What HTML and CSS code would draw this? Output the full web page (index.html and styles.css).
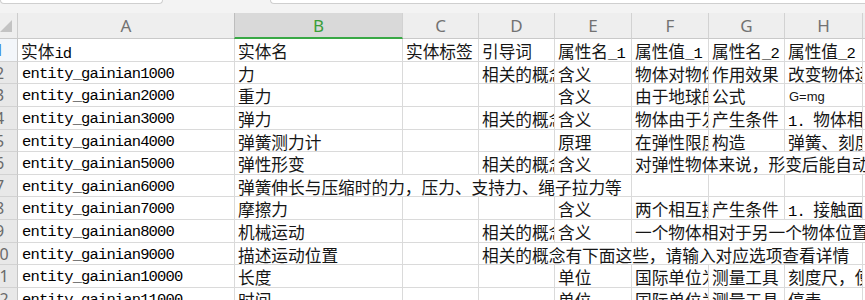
FILE: index.html
```html
<!DOCTYPE html>
<html lang="zh">
<head>
<meta charset="utf-8">
<title>Sheet</title>
<link rel="stylesheet" href="styles.css">
</head>
<body>
<div class="topbar">
  <div class="namebox"></div>
  <div class="formula"></div>
</div>
<div class="sheet">
  <div class="corner"><div class="tri"></div></div>
  <div class="h">A</div><div class="h sel">B</div><div class="h">C</div><div class="h">D</div><div class="h">E</div><div class="h">F</div><div class="h">G</div><div class="h">H</div><div class="h">I</div>

  <div class="r act">1</div>
  <div class="c">实体<span class="m">id</span></div><div class="c">实体名</div><div class="c">实体标签</div><div class="c">引导词</div><div class="c">属性名<span class="m">_1</span></div><div class="c">属性值<span class="m">_1</span></div><div class="c">属性名<span class="m">_2</span></div><div class="c">属性值<span class="m">_2</span></div><div class="c">属性名<span class="m">_3</span></div>

  <div class="r">2</div>
  <div class="c m">entity_gainian1000</div><div class="c">力</div><div class="c"></div><div class="c">相关的概念有下面这些</div><div class="c">含义</div><div class="c">物体对物体的作用</div><div class="c">作用效果</div><div class="c">改变物体运动状态或形状</div><div class="c"></div>

  <div class="r">3</div>
  <div class="c m">entity_gainian2000</div><div class="c">重力</div><div class="c"></div><div class="c"></div><div class="c">含义</div><div class="c">由于地球的吸引而使物体受到的力</div><div class="c">公式</div><div class="c f">G=mg</div><div class="c"></div>

  <div class="r">4</div>
  <div class="c m">entity_gainian3000</div><div class="c">弹力</div><div class="c"></div><div class="c">相关的概念有下面这些</div><div class="c">含义</div><div class="c">物体由于发生弹性形变而产生的力</div><div class="c">产生条件</div><div class="c"><span class="m">1. </span>物体相互接触</div><div class="c"></div>

  <div class="r">5</div>
  <div class="c m">entity_gainian4000</div><div class="c">弹簧测力计</div><div class="c"></div><div class="c"></div><div class="c">原理</div><div class="c">在弹性限度内，弹簧的伸长量与拉力成正比</div><div class="c">构造</div><div class="c">弹簧、刻度盘、指针</div><div class="c"></div>

  <div class="r">6</div>
  <div class="c m">entity_gainian5000</div><div class="c">弹性形变</div><div class="c"></div><div class="c">相关的概念有下面这些</div><div class="c">含义</div><div class="c s4">对弹性物体来说，形变后能自动恢复原状的形变</div>

  <div class="r">7</div>
  <div class="c m">entity_gainian6000</div><div class="c s4">弹簧伸长与压缩时的力，压力、支持力、绳子拉力等</div><div class="c"></div><div class="c"></div><div class="c"></div><div class="c"></div>

  <div class="r">8</div>
  <div class="c m">entity_gainian7000</div><div class="c">摩擦力</div><div class="c"></div><div class="c"></div><div class="c">含义</div><div class="c">两个相互接触的物体</div><div class="c">产生条件</div><div class="c"><span class="m">1. </span>接触面粗糙</div><div class="c"></div>

  <div class="r">9</div>
  <div class="c m">entity_gainian8000</div><div class="c">机械运动</div><div class="c"></div><div class="c">相关的概念有下面这些</div><div class="c">含义</div><div class="c s4">一个物体相对于另一个物体位置的改变</div>

  <div class="r">10</div>
  <div class="c m">entity_gainian9000</div><div class="c">描述运动位置</div><div class="c"></div><div class="c s5">相关的概念有下面这些，请输入对应选项查看详情</div><div class="c"></div>

  <div class="r">11</div>
  <div class="c m">entity_gainian10000</div><div class="c">长度</div><div class="c"></div><div class="c"></div><div class="c">单位</div><div class="c">国际单位为米</div><div class="c">测量工具</div><div class="c">刻度尺，使用时</div><div class="c"></div>

  <div class="r">12</div>
  <div class="c m">entity_gainian11000</div><div class="c">时间</div><div class="c"></div><div class="c"></div><div class="c">单位</div><div class="c">国际单位为秒</div><div class="c">测量工具</div><div class="c">停表</div><div class="c"></div>
</div>
</body>
</html>
```
FILE: styles.css
```css
html, body {
  margin: 0;
  padding: 0;
  background: #ffffff;
  overflow: hidden;
  width: 865px;
  height: 300px;
}

.topbar {
  height: 13px;
  background: #f3f3f3;
  display: flex;
  align-items: flex-start;
  box-sizing: border-box;
}

.namebox,
.formula {
  height: 4px;
  background: #ffffff;
  border: 1px solid #cfcfcf;
  border-top: none;
  box-sizing: border-box;
}

.namebox {
  width: 163px;
  border-radius: 0 0 4px 4px;
}

.formula {
  flex: 1;
  margin-left: 107px;
  border-right: none;
  border-radius: 0 0 0 4px;
}

.sheet {
  display: grid;
  grid-template-columns: 36px 217px 168px 76px 76px 77px 77px 76px 78px 100px;
  grid-template-rows: 26px repeat(12, 22.65px);
  margin-left: -18px;
}

.corner {
  background: #eeeeee;
  border-right: 1px solid #cdcdcd;
  border-bottom: 1px solid #c9c9c9;
  display: flex;
  justify-content: flex-end;
  align-items: flex-end;
  padding: 0 5px 6px 0;
  box-sizing: border-box;
}

.tri {
  width: 12px;
  height: 12px;
  background: #c3c3c3;
  clip-path: polygon(100% 0, 100% 100%, 0 100%);
}

.h {
  background: #eeeeee;
  color: #727272;
  font-family: "Noto Sans", "Noto Sans CJK SC", sans-serif;
  font-size: 17px;
  line-height: 26px;
  text-align: center;
  border-right: 1px solid #d2d2d2;
  border-bottom: 1px solid #c9c9c9;
  box-sizing: border-box;
}

.h.sel {
  background: #d9d9d9;
  color: #3a9e3a;
  border-bottom: 2px solid #39a845;
  border-left: 1px solid #bdbdbd;
  margin-left: -1px;
}

.r {
  background: #e8e8e8;
  color: #6a6a6a;
  font-family: "Noto Sans", sans-serif;
  font-size: 16px;
  line-height: 23px;
  text-align: center;
  border-right: 1px solid #c6c6c6;
  border-bottom: 1px solid #d2d2d2;
  box-sizing: border-box;
}

.r.act {
  background: #f3f6fa;
  color: #3d86d6;
}

.c {
  border-right: 1px solid #dadada;
  border-bottom: 1px solid #dadada;
  box-sizing: border-box;
  padding: 2px 0 0 3px;
  overflow: hidden;
  white-space: nowrap;
  font-family: "Noto Sans CJK SC", sans-serif;
  font-size: 16.7px;
  line-height: 21px;
  color: #161616;
}

.m {
  font-family: "Liberation Mono", "Noto Sans CJK SC", monospace;
  font-size: 15.5px;
  letter-spacing: -0.86px;
  color: #000000;
}

.c.m {
  padding-left: 4px;
}

.f {
  font-family: "Liberation Sans", sans-serif;
  font-size: 13px;
  padding-left: 4px;
}

.s4 {
  grid-column: span 4;
}

.s5 {
  grid-column: span 5;
}
```
